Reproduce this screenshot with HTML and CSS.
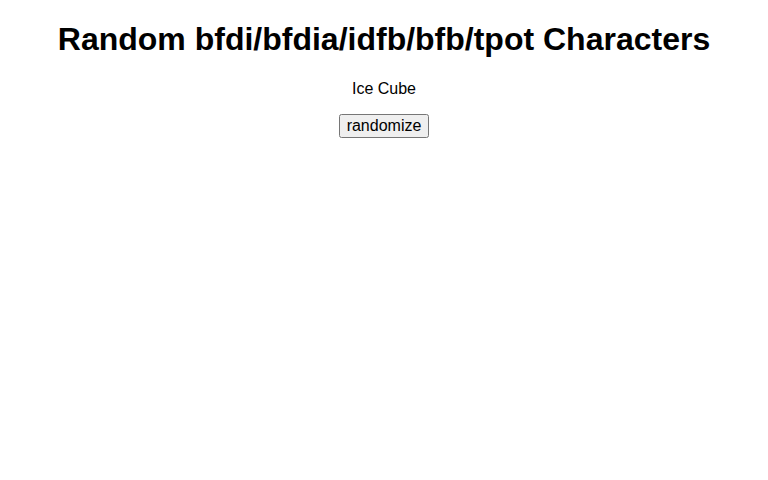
FILE: index.html
```html
<!DOCTYPE html>
<html>
<head>
<meta charset="utf-8">
<link rel="stylesheet" href="styles.css">
</head>
<body>
<h1 class="title">Random bfdi/bfdia/idfb/bfb/tpot Characters</h1>
<p class="result">Ice Cube</p>
<button class="btn">randomize</button>
</body>
</html>
```
FILE: styles.css
```css
body {
  margin: 0;
  padding: 0;
  font-family: "Liberation Sans", Arial, sans-serif;
  text-align: center;
}
.title {
  font-size: 32px;
  margin: 21.44px 0;
}
.result {
  font-size: 16px;
  margin: 16px 0;
}
.btn {
  font-family: "Liberation Sans", Arial, sans-serif;
  font-size: 16px;
}
```
